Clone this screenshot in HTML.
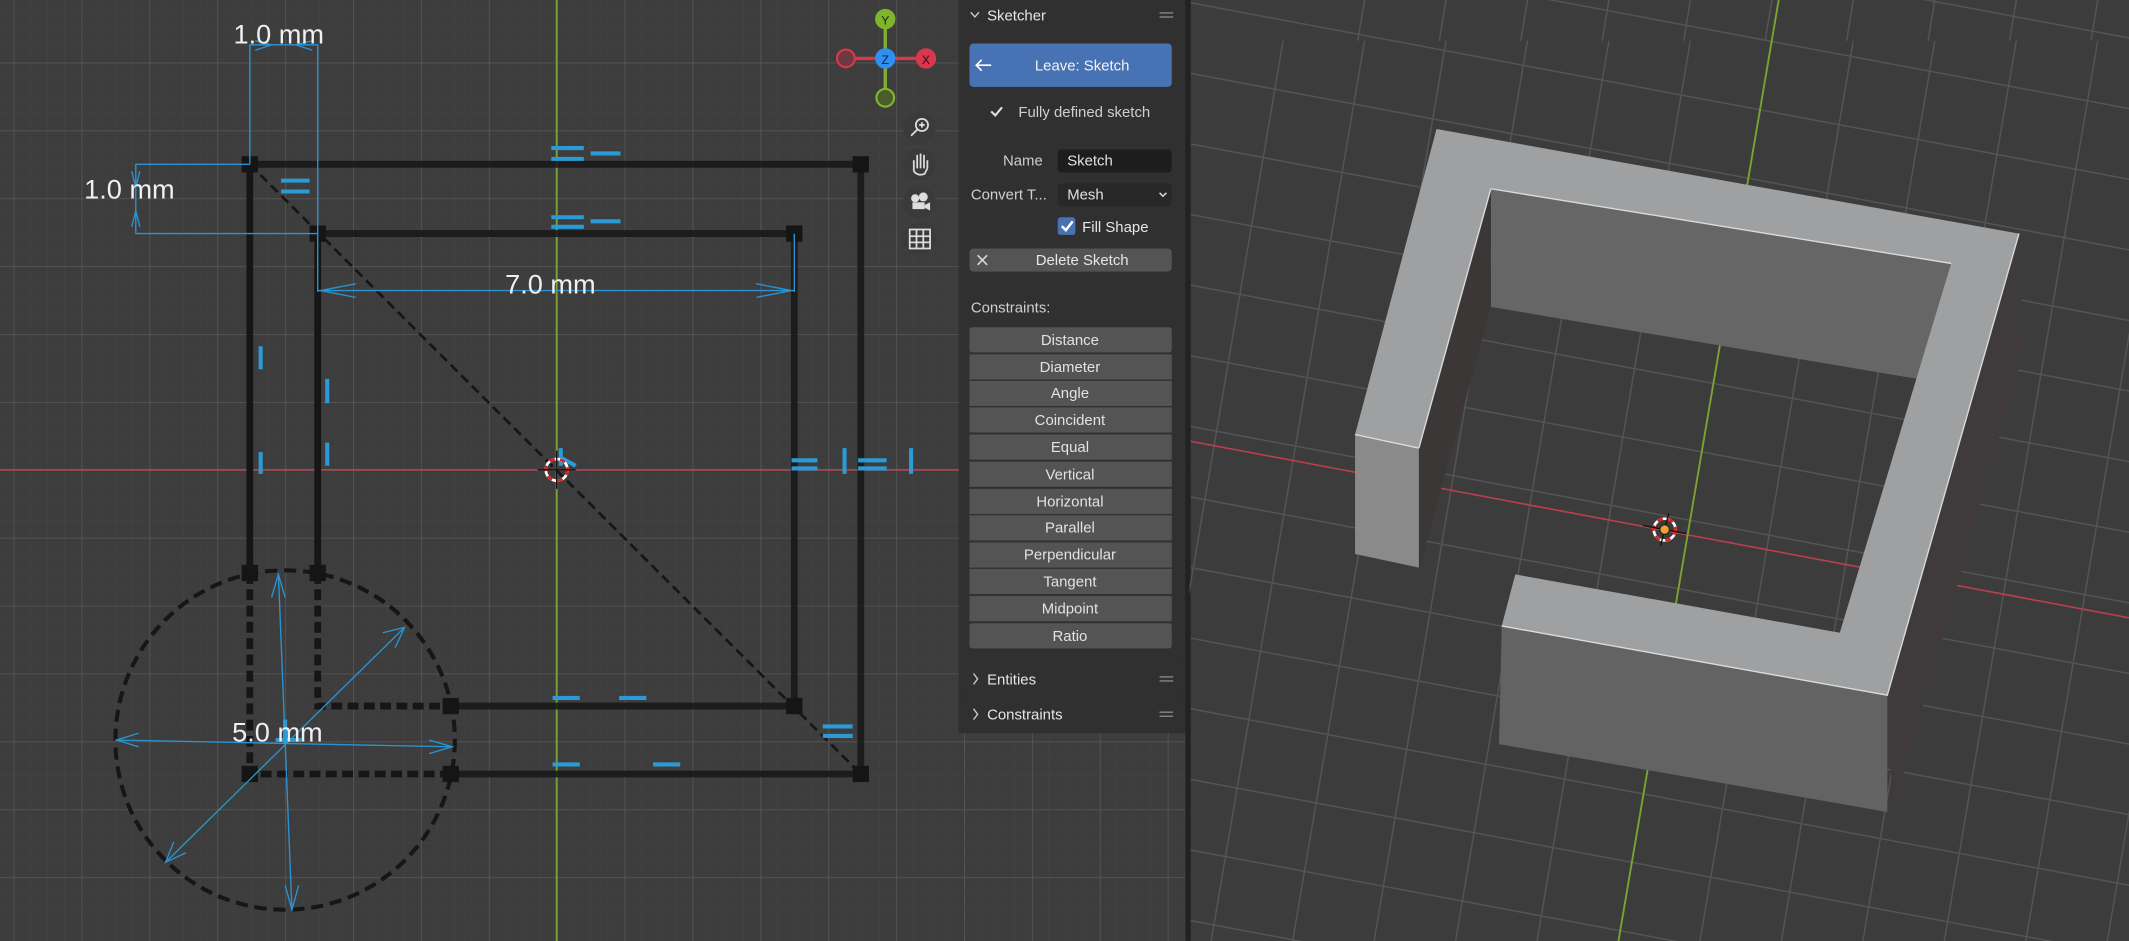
<!DOCTYPE html>
<html><head><meta charset="utf-8"><style>
html,body{margin:0;padding:0;background:#3d3d3d;overflow:hidden;width:2129px;height:941px}
#wrap{position:relative;width:2129px;height:941px;overflow:hidden}
svg{display:block;position:absolute;left:0;top:0}
text{font-family:"Liberation Sans","DejaVu Sans",sans-serif}
</style></head><body><div id="wrap">
<svg width="2129" height="941" viewBox="0 0 1568 693" xmlns="http://www.w3.org/2000/svg" overflow="hidden">
<defs>
<pattern id="g1" x="10" y="46" width="50" height="50" patternUnits="userSpaceOnUse">
<rect width="50" height="50" fill="#3d3d3d"/>
<path d="M12.5 0V50M25 0V50M37.5 0V50M0 12.5H50M0 25H50M0 37.5H50" stroke="#414141" stroke-width="0.6"/>
<path d="M0 0V50M0 0H50" stroke="#555" stroke-width="1.3"/>
</pattern>
<clipPath id="rv"><rect x="876" y="0" width="692" height="693"/></clipPath>
</defs>
<rect x="0" y="0" width="876" height="693" fill="url(#g1)"/>
<line x1="410" y1="0" x2="410" y2="693" stroke="#7ba232" stroke-width="1.4"/>
<line x1="0" y1="346" x2="876" y2="346" stroke="#b8404e" stroke-width="1.2"/>

<g stroke="#161616" fill="none" stroke-linecap="butt">
<path d="M184 121H634V570H332" stroke-width="5" opacity="0.85"/>
<path d="M184 121V422" stroke-width="5"/>
<path d="M184 422V570H332" stroke-width="5" stroke-dasharray="8 4"/>
<path d="M234 172H585V520H332" stroke-width="5" opacity="0.85"/>
<path d="M234 172V422" stroke-width="5"/>
<path d="M234 422V520H332" stroke-width="5" stroke-dasharray="8 4"/>
<path d="M184 121L634 570" stroke-width="2" stroke-dasharray="7 4"/>
<circle cx="210" cy="545" r="125" stroke-width="3" stroke-dasharray="9 5"/>
</g>
<g fill="#151515">
<rect x="178" y="115" width="12" height="12"/><rect x="628" y="115" width="12" height="12"/>
<rect x="228" y="166" width="12" height="12"/><rect x="579" y="166" width="12" height="12"/>
<rect x="178" y="416" width="12" height="12"/><rect x="228" y="416" width="12" height="12"/>
<rect x="326" y="514" width="12" height="12"/><rect x="579" y="514" width="12" height="12"/>
<rect x="178" y="564" width="12" height="12"/><rect x="326" y="564" width="12" height="12"/>
<rect x="628" y="564" width="12" height="12"/>
</g>
<g stroke="#2b93d1" stroke-width="1" fill="none">
<path d="M184 121V33H234V172"/>
<path d="M188 30L200 33L188 37M230 30L218 33L230 37"/>
<path d="M184 121H100V172H234"/>
<path d="M97 126L100 138L103 126M97 167L100 155L103 167"/>
<path d="M234 172V215M585 172V215M234 214H585"/>
<path d="M262 209L236 214L262 219M557 209L583 214L557 219"/>
<path d="M205 422L215 670M85 545L333 550M122 635L298 462"/>
<path d="M200 440L205 423L210 440M210 652L215 670L220 652M102 540L86 545L102 550M316 545L333 550L316 555M128 620L122 635L137 628M282 466L298 462L291 477"/>
</g>
<g stroke="#2a9bd6" stroke-width="3" fill="none">
<path d="M406 109H430M406 117H430M435 113H457"/>
<path d="M406 160H430M406 167H430M435 163H457"/>
<path d="M207 133H228M207 141H228"/>
<path d="M192 255V272M241 279V297M241 326V343M192 333V349"/>
<path d="M583 339H602M583 345H602M622 330V349M632 339H653M632 345H653M671 330V349"/>
<path d="M407 514H427M456 514H476M407 563H427M481 563H501"/>
<path d="M606 535H628M606 542H628"/>
<path d="M413 330V343M413 337L424 343"/>
<path d="M210 530V548M203 545H222"/>
</g>
<g font-size="20" fill="#f0f0f0">
<text x="172" y="32">1.0 mm</text>
<text x="62" y="146">1.0 mm</text>
<text x="372" y="216">7.0 mm</text>
<text x="171" y="546">5.0 mm</text>
</g>
<circle cx="410" cy="346" r="8" fill="none" stroke="#fff" stroke-width="2"/>
<circle cx="410" cy="346" r="8" fill="none" stroke="#e02020" stroke-width="2" stroke-dasharray="4 4"/>
<path d="M396 346H424M410 332V360" stroke="#111" stroke-width="1"/>

<path d="M652 14V72" stroke="#7fae30" stroke-width="2.5"/>
<path d="M623 43H682" stroke="#d8374d" stroke-width="2.5"/>
<circle cx="652" cy="14" r="7.5" fill="#7fb52c"/><text x="652" y="18" font-size="9" text-anchor="middle" fill="#1d2a0a">Y</text>
<circle cx="623" cy="43" r="6.5" fill="#6a3a42" stroke="#d8374d" stroke-width="1.6"/>
<circle cx="682" cy="43" r="7.5" fill="#d8374d"/><text x="682" y="47" font-size="9" text-anchor="middle" fill="#3a0a12">X</text>
<circle cx="652" cy="72" r="6.5" fill="#4b5c2c" stroke="#7fb52c" stroke-width="1.6"/>
<circle cx="652" cy="43" r="7.5" fill="#2f8ff2"/><text x="652" y="47" font-size="9" text-anchor="middle" fill="#0c2240">Z</text>
<g fill="#3a3a3a" opacity="0.9">
<circle cx="677" cy="94" r="12"/><circle cx="677" cy="121" r="12"/><circle cx="677" cy="149" r="12"/><circle cx="677" cy="176" r="12"/>
</g>
<g stroke="#ddd" fill="none" stroke-width="1.3">
<circle cx="679" cy="92" r="4.5"/><path d="M676 95L671 100M679 90V94M677 92H681"/>
<path d="M673 126V118M675.5 124V114M678 124V113M680.5 124V114M683 124V118M673 126Q676 130 681 128L683 124"/>
<path d="M670 169H685V183H670ZM675 169V183M680 169V183M670 174H685M670 178.5H685"/>
</g>
<g fill="#ddd"><circle cx="674" cy="146" r="3"/><circle cx="680" cy="145" r="3.3"/><rect x="672" y="149" width="9" height="5"/><path d="M681 151L685 149V155L681 153Z"/></g>

<rect x="706" y="0" width="167" height="540" fill="#2e2e2e" opacity="0.88"/>
<rect x="708" y="0" width="163" height="488" rx="3" fill="#303030"/>
<path d="M715 9L718 12.5L721 9" stroke="#ccc" stroke-width="1" fill="none"/>
<text x="727" y="15" font-size="11" fill="#e6e6e6">Sketcher</text>
<g fill="#888"><rect x="854" y="9" width="10" height="1"/><rect x="854" y="12" width="10" height="1"/></g>
<rect x="714" y="32" width="149" height="32" rx="3" fill="#4772b3"/>
<path d="M730 48H719M723 44L719 48L723 52" stroke="#fff" stroke-width="1.2" fill="none"/>
<text x="797" y="52" font-size="11" text-anchor="middle" fill="#f3f3f3">Leave: Sketch</text>
<path d="M730 82L733 85L738 79" stroke="#ddd" stroke-width="1.6" fill="none"/>
<text x="750" y="86" font-size="11" fill="#cfcfcf">Fully defined sketch</text>
<text x="768" y="122" font-size="11" text-anchor="end" fill="#cfcfcf">Name</text>
<rect x="779" y="110" width="84" height="17" rx="3" fill="#1d1d1d"/>
<text x="786" y="122" font-size="11" fill="#e0e0e0">Sketch</text>
<text x="715" y="147" font-size="11" fill="#cfcfcf">Convert T...</text>
<rect x="779" y="135" width="84" height="17" rx="3" fill="#282828"/>
<text x="786" y="147" font-size="11" fill="#e0e0e0">Mesh</text>
<path d="M854 142L856.5 144.5L859 142" stroke="#ddd" stroke-width="1.1" fill="none"/>
<rect x="779" y="160" width="13" height="13" rx="2" fill="#4772b3"/>
<path d="M782 166.5L785 169.5L790 163" stroke="#fff" stroke-width="1.8" fill="none"/>
<text x="797" y="171" font-size="11" fill="#e6e6e6">Fill Shape</text>
<rect x="714" y="183" width="149" height="17" rx="3" fill="#545454"/>
<path d="M720 188L727 195M727 188L720 195" stroke="#ddd" stroke-width="1.1"/>
<text x="797" y="195" font-size="11" text-anchor="middle" fill="#e6e6e6">Delete Sketch</text>
<text x="715" y="230" font-size="11" fill="#cfcfcf">Constraints:</text>
<g fill="#545454">
<rect x="714" y="241" width="149" height="18.5" rx="2"/><rect x="714" y="261" width="149" height="18.5"/>
<rect x="714" y="280.5" width="149" height="18.5"/><rect x="714" y="300" width="149" height="18.5"/>
<rect x="714" y="320" width="149" height="18.5"/><rect x="714" y="340" width="149" height="18.5"/>
<rect x="714" y="360" width="149" height="18.5"/><rect x="714" y="379.5" width="149" height="18.5"/>
<rect x="714" y="399.5" width="149" height="18.5"/><rect x="714" y="419" width="149" height="18.5"/>
<rect x="714" y="439" width="149" height="18.5"/><rect x="714" y="459" width="149" height="18.5" rx="2"/>
</g>
<g font-size="11" text-anchor="middle" fill="#e2e2e2">
<text x="788" y="254">Distance</text><text x="788" y="274">Diameter</text><text x="788" y="293">Angle</text>
<text x="788" y="313">Coincident</text><text x="788" y="333">Equal</text><text x="788" y="353">Vertical</text>
<text x="788" y="373">Horizontal</text><text x="788" y="392">Parallel</text><text x="788" y="412">Perpendicular</text>
<text x="788" y="432">Tangent</text><text x="788" y="452">Midpoint</text><text x="788" y="472">Ratio</text>
</g>
<rect x="708" y="489" width="163" height="22" rx="3" fill="#303030"/>
<rect x="708" y="514" width="163" height="24" rx="3" fill="#303030"/>
<path d="M717 496L720 500L717 504M717 522L720 526L717 530" stroke="#ccc" stroke-width="1" fill="none"/>
<text x="727" y="504" font-size="11" fill="#e6e6e6">Entities</text>
<text x="727" y="530" font-size="11" fill="#e6e6e6">Constraints</text>
<g fill="#888"><rect x="854" y="498" width="10" height="1"/><rect x="854" y="501" width="10" height="1"/><rect x="854" y="524" width="10" height="1"/><rect x="854" y="527" width="10" height="1"/></g>

<rect x="873" y="0" width="4" height="693" fill="#222"/>
<g clip-path="url(#rv)">
<rect x="877" y="0" width="691" height="693" fill="#3c3c3c"/>
<g stroke="#545454" stroke-width="1.1">
<path d="M877 -50L1568 80M877 2L1568 132M877 54L1568 184M877 106L1568 236M877 158L1568 288M877 210L1568 340M877 262L1568 392M877 314L1568 444M877 366L1568 496M877 418L1568 548M877 470L1568 600M877 522L1568 652M877 574L1568 704M877 626L1568 756M877 678L1568 808M877 -102L1568 28M877 730L1568 860M877 -154L1568 -24"/>
<path d="M952 693L1065 30M1012 693L1125 30M1072 693L1185 30M1132 693L1245 30M1252 693L1365 30M1312 693L1425 30M1372 693L1485 30M1432 693L1545 30M1492 693L1605 30M892 693L1005 30M832 693L945 30M1552 693L1665 30M1120 30L1130 -30M1180 30L1190 -30M1240 30L1250 -30M1300 30L1310 -30M1360 30L1370 -30M1420 30L1430 -30M1480 30L1490 -30M1540 30L1550 -30M1060 30L1070 -30M1000 30L1010 -30"/>
</g>
<line x1="877" y1="325" x2="1568" y2="455" stroke="#b8404e" stroke-width="1.2"/>
<line x1="1192" y1="693" x2="1310" y2="0" stroke="#7ba232" stroke-width="1.4"/>
<polygon points="1098,139 1437,194 1418,280 1098,226" fill="#666"/>
<polygon points="1098,139 1098,226 1045,420 1045,330" fill="#3b3737"/>
<polygon points="1487,172 1490,260 1394,598 1390,512" fill="#3f3a3b"/>
<polygon points="998,320 1045,330 1045,418 998,408" fill="#8a8a8a"/>
<polygon points="1106,461 1390,512 1390,598 1104,548" fill="#636363"/>
<polygon points="1058,95 1487,172 1390,512 1106,461 1116,423 1355,466 1437,194 1098,139 1045,330 998,320" fill="#9fa0a1"/>
<path d="M1098,139 L1437,194 M1098,139 L1045,330 M1106,461 L1390,512 L1487,172 M998,320 L1045,330" stroke="#dcdcdc" stroke-width="1" fill="none"/>
<circle cx="1226" cy="390" r="8" fill="none" stroke="#fff" stroke-width="2"/>
<circle cx="1226" cy="390" r="8" fill="none" stroke="#e02020" stroke-width="2" stroke-dasharray="4 4"/>
<path d="M1210 387L1242 393M1229 378L1223 402" stroke="#111" stroke-width="1"/>
<circle cx="1226" cy="390" r="3.5" fill="#f5a030" stroke="#222" stroke-width="0.8"/>
</g>
</svg>
</div></body></html>
